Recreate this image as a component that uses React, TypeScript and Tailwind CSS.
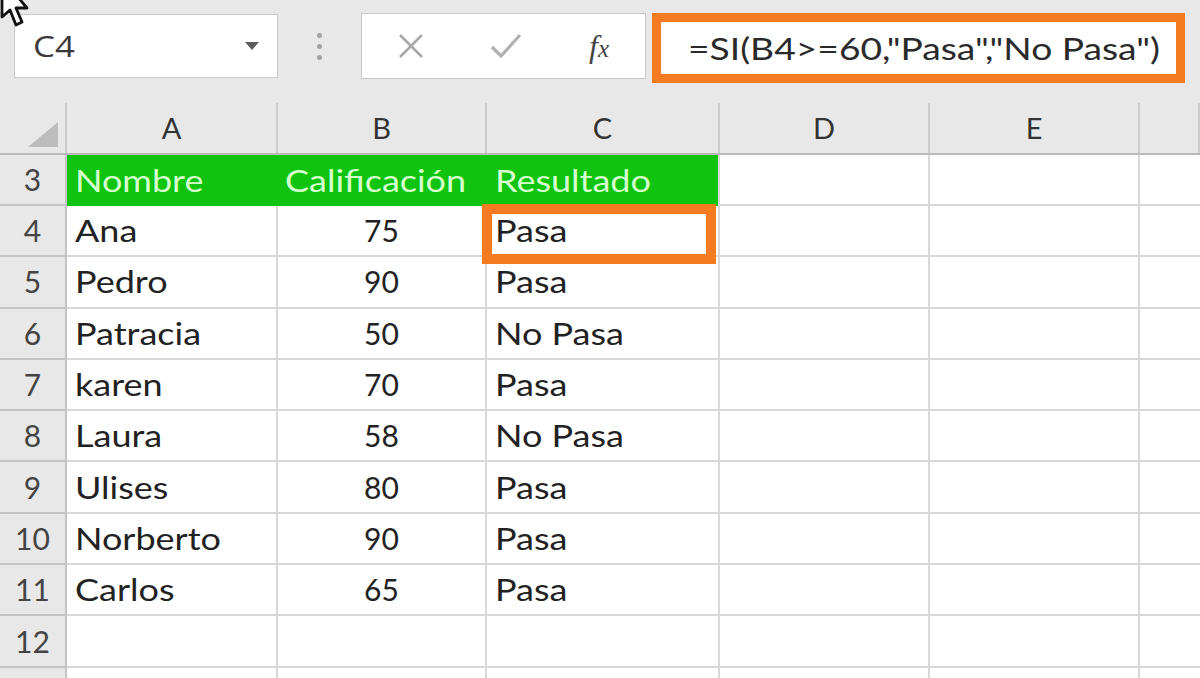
import React from "react";

const rows: [string, string, string, string][] = [
  ["4", "Ana", "75", "Pasa"],
  ["5", "Pedro", "90", "Pasa"],
  ["6", "Patracia", "50", "No Pasa"],
  ["7", "karen", "70", "Pasa"],
  ["8", "Laura", "58", "No Pasa"],
  ["9", "Ulises", "80", "Pasa"],
  ["10", "Norberto", "90", "Pasa"],
  ["11", "Carlos", "65", "Pasa"],
  ["12", "", "", ""],
  ["", "", "", ""],
];

const cols = "grid grid-cols-[67px_211px_209px_233px_210px_210px_1fr]";
const cellFont = { fontFamily: "Lato, 'Open Sans', sans-serif" };

// the screenshot is stretched sideways a little, so wide text is scaled on x
function Wide({ children }: { children: React.ReactNode }) {
  return <span className="inline-block origin-left scale-x-[1.2] whitespace-nowrap">{children}</span>;
}

function Cursor() {
  return (
    <svg className="absolute left-0 top-0 z-20" width="32" height="30" viewBox="0 0 32 30">
      <path
        d="M2 -22 L2 17 L10 10 L16 25 L22 22 L16 8 L27 8 Z"
        fill="#fff"
        stroke="#111"
        strokeWidth="2.8"
        strokeLinejoin="round"
      />
    </svg>
  );
}

export default function App() {
  return (
    <div className="relative h-[678px] w-[1200px] overflow-hidden bg-[#e8e8e8]" style={cellFont}>
      <Cursor />

      {/* formula bar */}
      <div className="flex h-[103px] items-start pl-[14px] pt-[13px]">
        <div className="mt-[1px] flex h-[64px] w-[264px] items-center justify-between border border-[#c8c8c8] bg-white pl-[18px] pr-[17px]">
          <span className="text-[29px] text-[#3a3a3a]" style={{ fontFamily: "'Open Sans', sans-serif" }}>
            <Wide>C4</Wide>
          </span>
          <svg width="16" height="10" viewBox="0 0 16 10">
            <path d="M1 1 L15 1 L8 9 Z" fill="#5c5c5c" />
          </svg>
        </div>
        <div className="flex h-[66px] w-[83px] flex-col items-center justify-center gap-[6px]">
          <span className="h-[5px] w-[5px] rounded-full bg-[#a3a3a3]" />
          <span className="h-[5px] w-[5px] rounded-full bg-[#a3a3a3]" />
          <span className="h-[5px] w-[5px] rounded-full bg-[#a3a3a3]" />
        </div>
        <div className="flex h-[66px] w-[285px] items-center border border-[#c8c8c8] bg-white">
          <div className="flex w-[96px] justify-center pl-[2px]">
            <svg width="28" height="28" viewBox="0 0 28 28">
              <path d="M3 3 L25 25 M25 3 L3 25" stroke="#a9a9a9" strokeWidth="2.6" />
            </svg>
          </div>
          <div className="flex w-[96px] justify-center">
            <svg width="34" height="28" viewBox="0 0 34 28">
              <path d="M3 15 L12 24 L31 3" fill="none" stroke="#b0b0b0" strokeWidth="3.2" />
            </svg>
          </div>
          <div className="flex w-[90px] justify-center">
            <span
              className="text-[32px] italic leading-none text-[#444]"
              style={{ fontFamily: "'Liberation Serif', serif" }}
            >
              f<span className="text-[25px]">x</span>
            </span>
          </div>
        </div>
        <div className="ml-[6px] flex h-[70px] w-[533px] items-center border-[9px] border-[#f47b22] bg-white pl-[27px]">
          <span className="text-[31px] text-[#2a2a2a]">
            <Wide>=SI(B4&gt;=60,"Pasa","No Pasa")</Wide>
          </span>
        </div>
      </div>

      {/* column headers */}
      <div className={`${cols} h-[52px] border-b-2 border-[#b9b9b9] text-[29px] text-[#333]`}>
        <div className="relative border-r-2 border-[#cdcdcd]">
          <svg className="absolute left-[28px] top-[19px]" width="30" height="25" viewBox="0 0 30 25">
            <path d="M30 0 L30 25 L0 25 Z" fill="#bdbdbd" />
          </svg>
        </div>
        {["A", "B", "C", "D", "E", ""].map((c, i) => (
          <div key={i} className="flex items-center justify-center border-r-2 border-[#cdcdcd]">
            {c}
          </div>
        ))}
      </div>

      {/* row 3 header */}
      <div className={`${cols} h-[51px] text-[30px]`}>
        <div className="flex items-center justify-center border-b-2 border-r-2 border-[#c4c4c4] text-[#444]">3</div>
        <div className="flex items-center bg-[#0fc30f] pl-[8px] text-[#d4ffcc]">
          <Wide>Nombre</Wide>
        </div>
        <div className="flex items-center bg-[#0fc30f] pl-[7px] text-[#d4ffcc]">
          <Wide>Calificación</Wide>
        </div>
        <div className="flex items-center border-r-2 border-[#d8d8d8] bg-[#0fc30f] pl-[8px] text-[#d4ffcc]">
          <Wide>Resultado</Wide>
        </div>
        <div className="border-b-2 border-r-2 border-[#d8d8d8] bg-white" />
        <div className="border-b-2 border-r-2 border-[#d8d8d8] bg-white" />
        <div className="border-b-2 border-[#d8d8d8] bg-white" />
      </div>

      {rows.map(([n, a, b, c], i) => (
        <div key={i} className={`${cols} h-[51.3px] text-[30px] text-[#222]`}>
          <div className="flex items-center justify-center border-b-2 border-r-2 border-[#c4c4c4] text-[#444]">{n}</div>
          <div className="flex items-center border-b-2 border-r-2 border-[#d8d8d8] bg-white pl-[8px]">
            <Wide>{a}</Wide>
          </div>
          <div className="flex items-center justify-center border-b-2 border-r-2 border-[#d8d8d8] bg-white">{b}</div>
          <div className="relative flex items-center border-b-2 border-r-2 border-[#d8d8d8] bg-white pl-[8px]">
            <Wide>{c}</Wide>
            {n === "4" && (
              <div className="absolute left-[-5px] top-[-2px] z-10 h-[60px] w-[234px] border-[10px] border-[#f47b22]" />
            )}
          </div>
          <div className="border-b-2 border-r-2 border-[#d8d8d8] bg-white" />
          <div className="border-b-2 border-r-2 border-[#d8d8d8] bg-white" />
          <div className="border-b-2 border-[#d8d8d8] bg-white" />
        </div>
      ))}
    </div>
  );
}
